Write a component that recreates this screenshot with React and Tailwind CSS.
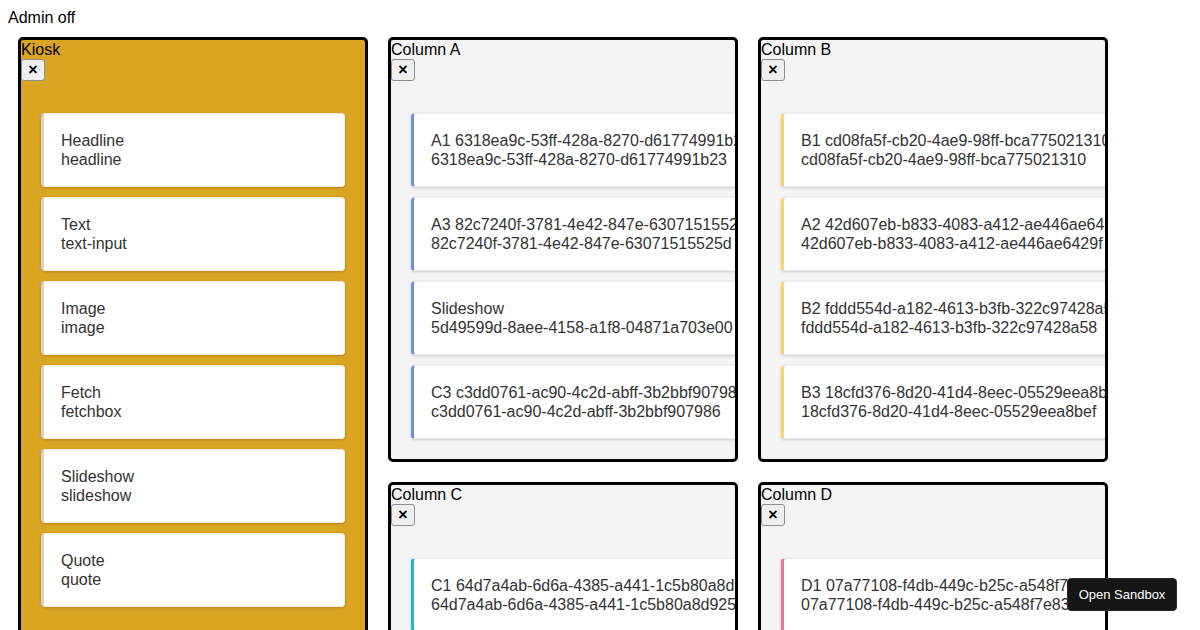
import React from 'react';

const kioskItems = [
    { title: 'Headline', sub: 'headline' },
    { title: 'Text', sub: 'text-input' },
    { title: 'Image', sub: 'image' },
    { title: 'Fetch', sub: 'fetchbox' },
    { title: 'Slideshow', sub: 'slideshow' },
    { title: 'Quote', sub: 'quote' },
];

const columns = [
    {
        name: 'Column A',
        accent: 'border-l-[#6f8fe6]',
        items: [
            { title: 'A1 6318ea9c-53ff-428a-8270-d61774991b23', sub: '6318ea9c-53ff-428a-8270-d61774991b23' },
            { title: 'A3 82c7240f-3781-4e42-847e-63071515525d', sub: '82c7240f-3781-4e42-847e-63071515525d' },
            { title: 'Slideshow', sub: '5d49599d-8aee-4158-a1f8-04871a703e00' },
            { title: 'C3 c3dd0761-ac90-4c2d-abff-3b2bbf907986', sub: 'c3dd0761-ac90-4c2d-abff-3b2bbf907986' },
        ],
    },
    {
        name: 'Column B',
        accent: 'border-l-[#f6d66f]',
        items: [
            { title: 'B1 cd08fa5f-cb20-4ae9-98ff-bca775021310', sub: 'cd08fa5f-cb20-4ae9-98ff-bca775021310' },
            { title: 'A2 42d607eb-b833-4083-a412-ae446ae6429f', sub: '42d607eb-b833-4083-a412-ae446ae6429f' },
            { title: 'B2 fddd554d-a182-4613-b3fb-322c97428a58', sub: 'fddd554d-a182-4613-b3fb-322c97428a58' },
            { title: 'B3 18cfd376-8d20-41d4-8eec-05529eea8bef', sub: '18cfd376-8d20-41d4-8eec-05529eea8bef' },
        ],
    },
    {
        name: 'Column C',
        accent: 'border-l-[#1fb6cf]',
        items: [
            { title: 'C1 64d7a4ab-6d6a-4385-a441-1c5b80a8d925', sub: '64d7a4ab-6d6a-4385-a441-1c5b80a8d925' },
        ],
    },
    {
        name: 'Column D',
        accent: 'border-l-[#e8759c]',
        items: [
            { title: 'D1 07a77108-f4db-449c-b25c-a548f7e83c1a', sub: '07a77108-f4db-449c-b25c-a548f7e83c1a' },
        ],
    },
];

function Card({ item, accent }) {
    return (
        <div className={`rounded-[4px] border border-[#ececec] border-l-[3px] ${accent} bg-white py-[17px] pl-[17px] pr-[20px] whitespace-nowrap text-[#333] leading-[19px] shadow-[0_1px_3px_rgba(0,0,0,0.18)]`}>
            <div>{item.title}</div>
            <div>{item.sub}</div>
        </div>
    );
}

function Column({ name, items, accent, bg, bottom = 'pb-[20px]' }) {
    return (
        <div className={`m-[10px] w-[350px] shrink-0 overflow-hidden rounded-[5px] border-[3px] border-black ${bg}`}>
            <div className="leading-[19px]">{name}</div>
            <button className="flex h-[22px] w-[24px] items-center justify-center rounded-[3px] border border-[#8f8f8f] bg-[#efefef] text-[16px] font-bold leading-none text-black">
                ×
            </button>
            <div className={`px-[20px] pt-[32px] ${bottom}`}>
                <div className="flex w-max min-w-full flex-col gap-[10px]">
                    {items.map((item) => (
                        <Card key={item.title} item={item} accent={accent} />
                    ))}
                </div>
            </div>
        </div>
    );
}

export default function App() {
    return (
        <div className="min-h-screen bg-white p-2 font-['Liberation_Sans',Arial,sans-serif] text-base text-black">
            <div className="leading-[19px]">Admin off</div>
            <div className="flex items-start">
                <Column name="Kiosk" items={kioskItems} accent="border-l-[#d4d4d4]" bg="bg-[#daa520]" bottom="pb-[30px]" />
                <div className="flex w-[740px] flex-wrap">
                    {columns.map((col) => (
                        <Column key={col.name} name={col.name} items={col.items} accent={col.accent} bg="bg-[#f4f4f4]" />
                    ))}
                </div>
            </div>
            <button className="fixed right-[23px] bottom-[19px] flex h-[33px] w-[110px] items-center justify-center rounded-[4px] border border-[#2a2a2a] bg-[#151515] text-[13px] text-white">
                Open Sandbox
            </button>
        </div>
    );
}
